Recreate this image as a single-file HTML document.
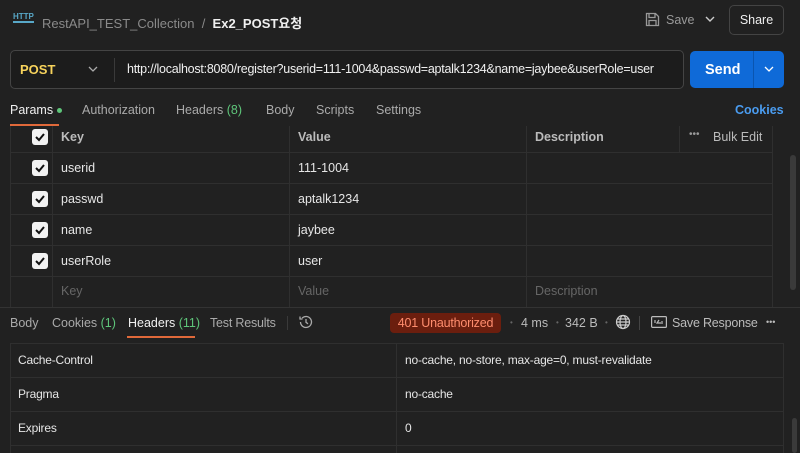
<!DOCTYPE html>
<html><head><meta charset="utf-8"><style>
*{box-sizing:border-box;margin:0;padding:0}
body{width:800px;height:453px;background:#212121;font-family:"Liberation Sans","Noto Sans CJK KR",sans-serif;color:#d8d8d8;position:relative;overflow:hidden;font-size:12.5px}
.a{position:absolute;white-space:nowrap}
.g{color:#5ec57a}
.cb{position:absolute;left:32px;width:16px;height:16px;background:#f2f2f2;border-radius:3px}
.cb svg{position:absolute;left:2px;top:2px}
.hl{position:absolute;height:1px;background:#2f2f2f}
.vl{position:absolute;width:1px;background:#2f2f2f}
.t{font-size:12.5px;color:#e6e6e6}
.r{font-size:12px;color:#e6e6e6;letter-spacing:-0.2px}
</style></head><body>
<!-- header -->
<div class="a" style="left:13px;top:12px;font-size:8px;font-weight:bold;color:#58a8c8;border-bottom:2px solid #58a8c8;line-height:9px">HTTP</div>
<div class="a" style="left:42px;top:13px;font-size:13px;color:#8a8a8a">RestAPI_TEST_Collection <span style="color:#8a8a8a">&nbsp;/&nbsp;</span> <b style="color:#f0f0f0">Ex2_POST요청</b></div>
<svg class="a" style="left:645px;top:12px" width="15" height="15" viewBox="0 0 15 15" fill="none" stroke="#999" stroke-width="1.3"><path d="M1.5 1.5h9l3 3v9h-12z M4 1.5v4h6v-4 M4 13.5v-5h7v5"/></svg>
<div class="a" style="left:666px;top:13px;color:#999">Save</div>
<svg class="a" style="left:705px;top:16px" width="10" height="7" viewBox="0 0 10 7"><path d="M1 1l4 4 4-4" stroke="#ccc" stroke-width="1.4" fill="none"/></svg>
<div class="a" style="left:729px;top:5px;width:55px;height:30px;border:1px solid #444;border-radius:5px;text-align:center;line-height:28px;color:#eee">Share</div>
<!-- url bar -->
<div class="a" style="left:10px;top:50px;width:674px;height:39px;border:1px solid #444;border-radius:5px;background:#1c1c1c"></div>
<div class="a" style="left:20px;top:62px;font-weight:bold;color:#f7d35c;font-size:13px">POST</div>
<svg class="a" style="left:88px;top:66px" width="10" height="7" viewBox="0 0 10 7"><path d="M1 1l4 4 4-4" stroke="#aaa" stroke-width="1.3" fill="none"/></svg>
<div class="vl" style="left:114px;top:58px;height:24px;background:#3a3a3a"></div>
<div class="a" style="left:127px;top:62px;color:#f0f0f0;font-size:12.5px;letter-spacing:-0.25px">http://localhost:8080/register?userid=111-1004&amp;passwd=aptalk1234&amp;name=jaybee&amp;userRole=user</div>
<div class="a" style="left:690px;top:51px;width:94px;height:37px;background:#0f6ad8;border-radius:5px"></div>
<div class="vl" style="left:753px;top:51px;height:37px;background:#0a55b0"></div>
<div class="a" style="left:705px;top:62px;font-size:14.5px;font-weight:bold;color:#fff">Send</div>
<svg class="a" style="left:764px;top:66px" width="10" height="7" viewBox="0 0 10 7"><path d="M1 1l4 4 4-4" stroke="#fff" stroke-width="1.3" fill="none"/></svg>
<!-- tabs -->
<div class="a" style="left:10px;top:103px;color:#f0f0f0">Params <span style="display:inline-block;width:5px;height:5px;border-radius:50%;background:#5ec57a;vertical-align:middle"></span></div>
<div class="a" style="left:82px;top:103px;color:#aaa">Authorization</div>
<div class="a" style="left:176px;top:103px;color:#aaa">Headers <span class="g">(8)</span></div>
<div class="a" style="left:266px;top:103px;color:#aaa">Body</div>
<div class="a" style="left:316px;top:103px;color:#aaa">Scripts</div>
<div class="a" style="left:376px;top:103px;color:#aaa">Settings</div>
<div class="a" style="left:735px;top:103px;color:#4a9cf0;font-weight:bold">Cookies</div>
<div class="a" style="left:10px;top:124px;width:49px;height:2px;background:#e0693a"></div>
<!-- params table -->
<div class="vl" style="left:10px;top:126px;height:182px"></div>
<div class="vl" style="left:52px;top:126px;height:182px"></div>
<div class="vl" style="left:289px;top:126px;height:182px"></div>
<div class="vl" style="left:526px;top:126px;height:182px"></div>
<div class="vl" style="left:679px;top:126px;height:26px"></div>
<div class="vl" style="left:772px;top:126px;height:182px"></div>
<div class="hl" style="left:10px;top:152px;width:762px"></div>
<div class="hl" style="left:10px;top:183px;width:762px"></div>
<div class="hl" style="left:10px;top:214px;width:762px"></div>
<div class="hl" style="left:10px;top:245px;width:762px"></div>
<div class="hl" style="left:10px;top:276px;width:762px"></div>
<div class="hl" style="left:0;top:307px;width:800px;background:#333"></div>
<div class="cb" style="top:129px"><svg width="12" height="12" viewBox="0 0 12 12"><path d="M2 6l3 3 5-6" stroke="#111" stroke-width="2" fill="none"/></svg></div>
<div class="cb" style="top:160px"><svg width="12" height="12" viewBox="0 0 12 12"><path d="M2 6l3 3 5-6" stroke="#111" stroke-width="2" fill="none"/></svg></div>
<div class="cb" style="top:191px"><svg width="12" height="12" viewBox="0 0 12 12"><path d="M2 6l3 3 5-6" stroke="#111" stroke-width="2" fill="none"/></svg></div>
<div class="cb" style="top:222px"><svg width="12" height="12" viewBox="0 0 12 12"><path d="M2 6l3 3 5-6" stroke="#111" stroke-width="2" fill="none"/></svg></div>
<div class="cb" style="top:253px"><svg width="12" height="12" viewBox="0 0 12 12"><path d="M2 6l3 3 5-6" stroke="#111" stroke-width="2" fill="none"/></svg></div>
<div class="a" style="left:61px;top:130px;color:#bbb;font-weight:bold;font-size:12.5px">Key</div>
<div class="a" style="left:298px;top:130px;color:#bbb;font-weight:bold;font-size:12.5px">Value</div>
<div class="a" style="left:535px;top:130px;color:#bbb;font-weight:bold;font-size:12.5px">Description</div>
<div class="a" style="left:689px;top:129px;color:#999;font-size:10px">•••</div>
<div class="a" style="left:713px;top:130px;color:#bbb;font-size:12.5px">Bulk Edit</div>
<div class="a t" style="left:61px;top:161px">userid</div><div class="a t" style="left:298px;top:161px">111-1004</div>
<div class="a t" style="left:61px;top:192px">passwd</div><div class="a t" style="left:298px;top:192px">aptalk1234</div>
<div class="a t" style="left:61px;top:223px">name</div><div class="a t" style="left:298px;top:223px">jaybee</div>
<div class="a t" style="left:61px;top:254px">userRole</div><div class="a t" style="left:298px;top:254px">user</div>
<div class="a" style="left:61px;top:284px;color:#666;font-size:12.5px">Key</div>
<div class="a" style="left:298px;top:284px;color:#666;font-size:12.5px">Value</div>
<div class="a" style="left:535px;top:284px;color:#666;font-size:12.5px">Description</div>
<div class="a" style="left:790px;top:155px;width:6px;height:135px;background:#3a3a3a;border-radius:3px"></div>
<!-- response tabs -->
<div class="a" style="left:10px;top:316px;color:#aaa">Body</div>
<div class="a" style="left:52px;top:316px;color:#aaa">Cookies <span class="g">(1)</span></div>
<div class="a" style="left:128px;top:316px;color:#f0f0f0">Headers <span class="g">(11)</span></div>
<div class="a" style="left:210px;top:316px;color:#aaa;letter-spacing:-0.2px">Test Results</div>
<div class="vl" style="left:287px;top:316px;height:14px;background:#3a3a3a"></div>
<svg class="a" style="left:298px;top:314px" width="16" height="16" viewBox="0 0 16 16" fill="none" stroke="#aaa" stroke-width="1.3"><path d="M2.5 8a5.5 5.5 0 1 0 1.6-3.9M2 2.5v2.5h2.5M8 5v3.3l2 1.5"/></svg>
<div class="a" style="left:127px;top:336px;width:68px;height:2px;background:#e0693a"></div>
<div class="a" style="left:390px;top:313px;width:111px;height:20px;background:#6b1e0e;border-radius:4px;color:#ff8d6e;text-align:center;line-height:20px;font-size:12.5px;letter-spacing:-0.2px">401 Unauthorized</div>
<div class="a" style="left:510px;top:316px;color:#666;font-size:8px;line-height:14px">•</div>
<div class="a" style="left:521px;top:316px;color:#bbb">4 ms</div>
<div class="a" style="left:556px;top:316px;color:#666;font-size:8px;line-height:14px">•</div>
<div class="a" style="left:565px;top:316px;color:#bbb">342 B</div>
<div class="a" style="left:605px;top:316px;color:#666;font-size:8px;line-height:14px">•</div>
<svg class="a" style="left:615px;top:314px" width="16" height="16" viewBox="0 0 16 16" fill="none" stroke="#ccc" stroke-width="1.2"><circle cx="8" cy="8" r="6.5"/><ellipse cx="8" cy="8" rx="3" ry="6.5"/><path d="M1.5 8h13M2.5 5h11M2.5 11h11"/></svg>
<div class="vl" style="left:639px;top:316px;height:14px;background:#444"></div>
<svg class="a" style="left:651px;top:316px" width="16" height="12" viewBox="0 0 16 12" fill="none" stroke="#bbb" stroke-width="1.2"><rect x="0.6" y="0.6" width="14.8" height="10.8" rx="1"/><path d="M4 4v3M8 4l-2 3h4M11 5v3"/></svg>
<div class="a" style="left:672px;top:316px;color:#bbb;letter-spacing:-0.2px">Save Response</div>
<div class="a" style="left:766px;top:317px;color:#bbb;font-size:9px">•••</div>
<!-- response table -->
<div class="vl" style="left:10px;top:343px;height:110px"></div>
<div class="vl" style="left:396px;top:343px;height:110px"></div>
<div class="vl" style="left:783px;top:343px;height:110px"></div>
<div class="hl" style="left:10px;top:343px;width:773px"></div>
<div class="hl" style="left:10px;top:377px;width:773px"></div>
<div class="hl" style="left:10px;top:411px;width:773px"></div>
<div class="hl" style="left:10px;top:445px;width:773px"></div>
<div class="a r" style="left:18px;top:353px">Cache-Control</div><div class="a r" style="left:405px;top:353px">no-cache, no-store, max-age=0, must-revalidate</div>
<div class="a r" style="left:18px;top:387px">Pragma</div><div class="a r" style="left:405px;top:387px">no-cache</div>
<div class="a r" style="left:18px;top:421px">Expires</div><div class="a r" style="left:405px;top:421px">0</div>
<div class="a" style="left:792px;top:418px;width:5px;height:35px;background:#3a3a3a;border-radius:3px"></div>
</body></html>
